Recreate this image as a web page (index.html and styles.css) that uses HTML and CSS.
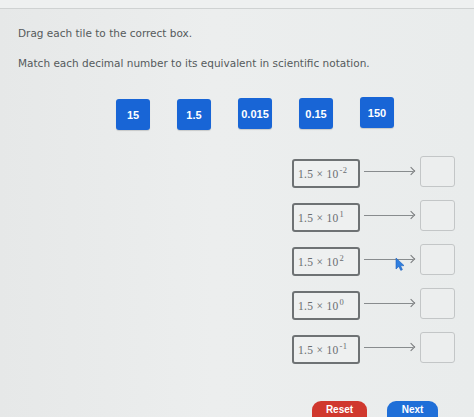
FILE: index.html
```html
<!DOCTYPE html>
<html>
<head>
<meta charset="utf-8">
<link rel="stylesheet" href="styles.css">
</head>
<body>
<div class="topbar"></div>
<div class="page">
  <p class="instr first">Drag each tile to the correct box.</p>
  <p class="instr second">Match each decimal number to its equivalent in scientific notation.</p>
  <div class="tiles">
    <div class="tile">15</div>
    <div class="tile">1.5</div>
    <div class="tile">0.015</div>
    <div class="tile">0.15</div>
    <div class="tile">150</div>
  </div>
  <div class="rows">
    <div class="row">
      <div class="expr">1.5 × 10<sup>-2</sup></div>
      <div class="arrow"><span class="line"></span><span class="head"></span></div>
      <div class="target"></div>
    </div>
    <div class="row">
      <div class="expr">1.5 × 10<sup>1</sup></div>
      <div class="arrow"><span class="line"></span><span class="head"></span></div>
      <div class="target"></div>
    </div>
    <div class="row">
      <div class="expr">1.5 × 10<sup>2</sup></div>
      <div class="arrow"><span class="line"></span><span class="head"></span>
        <svg class="cursor" width="10" height="14" viewBox="0 0 10 14"><path d="M1 1 L1 12 L3.8 9.4 L5.8 13.4 L7.4 12.6 L5.5 8.8 L9 8.6 Z" fill="#2f7fe0" stroke="#1f5fb8" stroke-width="0.6"/></svg>
      </div>
      <div class="target"></div>
    </div>
    <div class="row">
      <div class="expr">1.5 × 10<sup>0</sup></div>
      <div class="arrow"><span class="line"></span><span class="head"></span></div>
      <div class="target"></div>
    </div>
    <div class="row">
      <div class="expr">1.5 × 10<sup>-1</sup></div>
      <div class="arrow"><span class="line"></span><span class="head"></span></div>
      <div class="target"></div>
    </div>
  </div>
  <div class="buttons">
    <div class="btn reset">Reset</div>
    <div class="btn next">Next</div>
  </div>
</div>
</body>
</html>
```
FILE: styles.css
```css
html, body {
  margin: 0;
  padding: 0;
  height: 417px;
  overflow: hidden;
}
body {
  background: linear-gradient(90deg, #e6e8e8 0%, #eceeee 45%, #e9ecec 100%);
  font-family: "DejaVu Sans", Verdana, sans-serif;
}
.topbar {
  height: 8px;
  background: #eef0f0;
  border-bottom: 1px solid #cfd2d2;
}
.page {
  padding-left: 18px;
}
.instr {
  margin: 0;
  font-size: 10.5px;
  color: #555a5c;
  line-height: 12px;
}
.first {
  padding-top: 18px;
}
.second {
  padding-top: 18px;
}
.tiles {
  display: flex;
  gap: 27px;
  margin-top: 30px;
  margin-left: 98px;
  align-items: flex-start;
}
.tile {
  width: 34px;
  height: 31px;
  background: #1865d6;
  border-radius: 3px;
  color: #fff;
  font-family: "Liberation Sans", Arial, sans-serif;
  font-size: 11px;
  font-weight: bold;
  display: flex;
  align-items: center;
  justify-content: center;
  box-shadow: 0 1px 1px rgba(0,0,0,0.15);
}
.tiles .tile:nth-child(3) { margin-top: -1px; }
.tiles .tile:nth-child(4) { margin-top: -1px; }
.tiles .tile:nth-child(5) { margin-top: -2px; }
.rows {
  margin-top: 26px;
  margin-left: 274px;
  display: flex;
  flex-direction: column;
  gap: 13px;
}
.row {
  display: flex;
  align-items: center;
  height: 31px;
}
.expr {
  width: 60px;
  height: 25px;
  line-height: 27px;
  border: 2px solid #6e7274;
  border-radius: 3px;
  background: #eef0f0;
  font-family: "Liberation Serif", "Times New Roman", serif;
  font-size: 11.5px;
  letter-spacing: 0.3px;
  color: #6a6e70;
  padding-left: 4px;
  box-sizing: content-box;
  margin-top: 3px;
  white-space: nowrap;
}
.expr sup {
  font-size: 8.5px;
  vertical-align: 5px;
  line-height: 0;
  margin-left: 1px;
}
.arrow {
  position: relative;
  width: 57px;
  height: 10px;
  margin-left: 3px;
  margin-top: 1px;
}
.line {
  position: absolute;
  left: 1px;
  top: 4px;
  width: 49px;
  height: 1px;
  background: #888c8e;
}
.head {
  position: absolute;
  left: 45px;
  top: 1px;
  width: 5px;
  height: 5px;
  border-right: 1.3px solid #77797b;
  border-top: 1.3px solid #77797b;
  transform: rotate(45deg);
}
.cursor {
  position: absolute;
  left: 32px;
  top: 2px;
}
.target {
  width: 33px;
  height: 29px;
  border: 1px solid #c3c6c7;
  border-radius: 3px;
  background: #eceeee;
}
.buttons {
  display: flex;
  gap: 20px;
  margin-left: 294px;
  margin-top: 38px;
}
.btn {
  height: 26px;
  border-radius: 9px;
  color: #fff;
  font-family: "Liberation Sans", Arial, sans-serif;
  font-weight: bold;
  font-size: 10px;
  display: flex;
  justify-content: center;
  padding-top: 3px;
  box-sizing: border-box;
}
.reset {
  width: 55px;
  background: #d0382e;
}
.next {
  width: 51px;
  background: #1f6fd8;
}
```
